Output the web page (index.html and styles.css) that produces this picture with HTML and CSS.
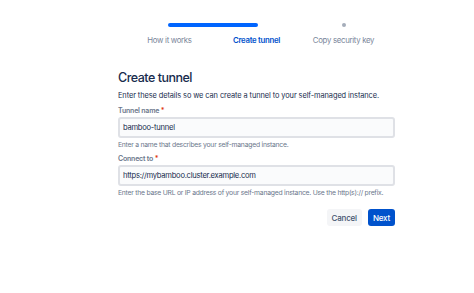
FILE: index.html
```html
<!DOCTYPE html>
<html lang="en">

<head>
    <meta charset="UTF-8">
    <meta name="viewport" content="width=device-width, initial-scale=1.0">
    <title>Create tunnel</title>
    <link rel="stylesheet" href="styles.css">
</head>

<body>
    <div class="stepper">
        <div class="track">
            <div class="bar"></div>
            <div class="dot"></div>
        </div>
        <div class="steps">
            <div class="step">How it works</div>
            <div class="step active">Create tunnel</div>
            <div class="step">Copy security key</div>
        </div>
    </div>

    <form class="form" onsubmit="return false">
        <h1>Create tunnel</h1>
        <p class="intro">Enter these details so we can create a tunnel to your self-managed instance.</p>

        <label for="tunnelName">Tunnel name <span class="req">*</span></label>
        <input type="text" id="tunnelName" value="bamboo-tunnel">
        <div class="help">Enter a name that describes your self-managed instance.</div>

        <label for="connectTo">Connect to <span class="req">*</span></label>
        <input type="text" id="connectTo" value="https://mybamboo.cluster.example.com">
        <div class="help">Enter the base URL or IP address of your self-managed instance. Use the http(s):// prefix.</div>

        <div class="actions">
            <button type="button" class="button subtle">Cancel</button>
            <button type="submit" class="button primary">Next</button>
        </div>
    </form>
</body>

</html>
```

FILE: styles.css
```css
body {
    font-family: 'Inter', 'Liberation Sans', sans-serif;
    background-color: #fff;
    color: #172b4d;
    margin: 0;
    padding-left: 39px;
}

.stepper {
    width: 261px;
    margin: 0 auto;
    padding-top: 23px;
}

.track {
    display: flex;
    align-items: center;
    height: 4px;
}

.bar {
    width: 90px;
    height: 4px;
    margin-left: 42px;
    background-color: #0065ff;
    border-radius: 2px;
}

.dot {
    width: 4px;
    height: 4px;
    margin-left: 83.5px;
    background-color: #a5adba;
    border-radius: 50%;
}

.steps {
    display: grid;
    grid-template-columns: repeat(3, 87px);
    margin-top: 8px;
}

.step {
    text-align: center;
    font-size: 7.8px;
    letter-spacing: -0.3px;
    line-height: 10px;
    color: #7a869a;
}

.step.active {
    color: #0052cc;
    font-weight: 600;
}

.form {
    width: 277px;
    margin: 0 auto;
    padding-top: 26px;
}

h1 {
    font-size: 12.5px;
    letter-spacing: -0.5px;
    line-height: 14px;
    font-weight: 500;
    margin: 0 0 6px;
}

.intro {
    font-size: 7.4px;
    letter-spacing: -0.08px;
    line-height: 10px;
    margin: 0 0 6px;
}

label {
    display: block;
    font-size: 7px;
    letter-spacing: -0.2px;
    line-height: 8px;
    font-weight: 600;
    color: #6b778c;
    margin-bottom: 2px;
}

.req {
    color: #de350b;
}

input[type="text"] {
    display: block;
    box-sizing: border-box;
    width: 100%;
    height: 21px;
    padding: 0 3px;
    border: 2px solid #dfe1e6;
    border-radius: 3px;
    background-color: #fafbfc;
    font-family: inherit;
    font-size: 7.6px;
    letter-spacing: -0.26px;
    color: #172b4d;
}

.help {
    font-size: 6.8px;
    letter-spacing: -0.24px;
    line-height: 8px;
    color: #6b778c;
    margin: 3px 0 6px;
}

.actions {
    display: flex;
    justify-content: flex-end;
    gap: 6px;
    margin-top: 12px;
}

.button {
    height: 17px;
    padding: 0 5px;
    border: none;
    border-radius: 3px;
    font-family: inherit;
    font-size: 8px;
    letter-spacing: -0.2px;
    font-weight: 500;
    cursor: pointer;
}

.subtle {
    background-color: #f4f5f7;
    color: #42526e;
}

.primary {
    background-color: #0052cc;
    color: #fff;
}
```
